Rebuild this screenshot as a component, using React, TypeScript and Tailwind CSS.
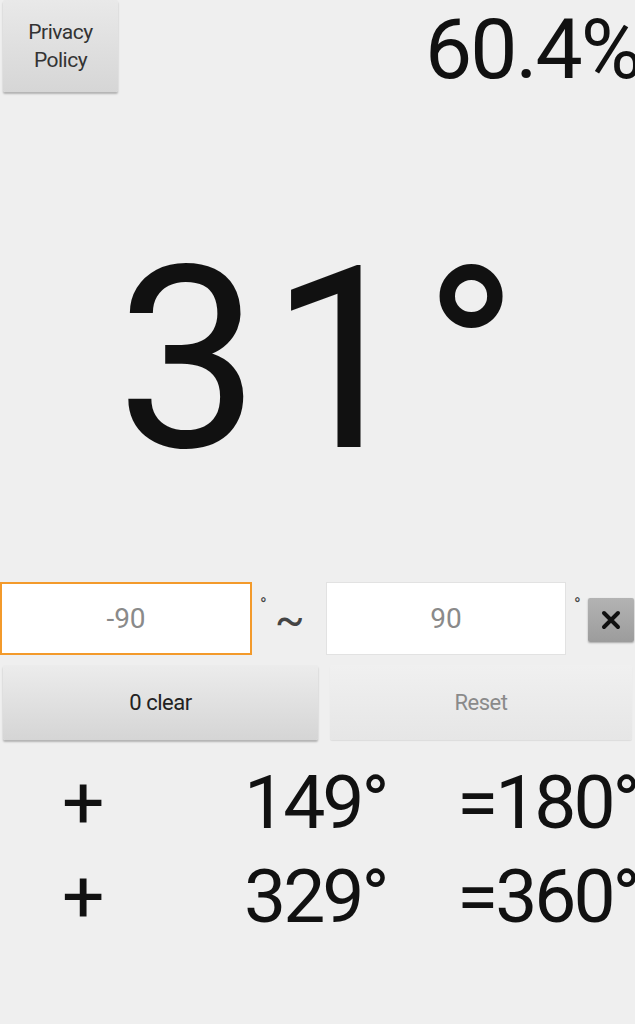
export default function App() {
  return (
    <div
      className="w-[635px] h-[1024px] overflow-hidden bg-[#efefef] text-black"
      style={{ fontFamily: "Roboto, 'Liberation Sans', sans-serif" }}
    >
      {/* top bar */}
      <div className="flex h-[92px] items-start">
        <button className="shrink-0 ml-[3px] w-[115px] h-[92px] rounded-[2px] bg-gradient-to-b from-[#e9e9e9] to-[#d6d6d6] shadow-[0_2px_2px_rgba(0,0,0,0.25)] text-[21px] leading-[28px] text-[#333] tracking-[-0.5px] flex flex-col items-center justify-center">
          <span>Privacy</span>
          <span>Policy</span>
        </button>
        <div className="shrink-0 ml-[307px] mt-[8px] whitespace-nowrap text-[84px] leading-none text-[#111] tracking-[-2px]">
          60.4%
        </div>
      </div>

      {/* big angle */}
      <div className="mt-[140px] h-[255px] text-center text-[255px] leading-none text-[#111] tracking-[10px] pl-[10px]">
        31°
      </div>

      {/* range inputs */}
      <div className="mt-[95px] flex items-start h-[73px]">
        <div className="shrink-0 w-[252px] h-[73px] bg-white border-2 border-[#f39a2b] flex items-center justify-center text-[28px] text-[#8a8a8a]">
          -90
        </div>
        <div className="shrink-0 w-[74px] h-[73px] flex items-start text-[#444]">
          <span className="ml-[8px] mt-[14px] text-[18px] leading-none">°</span>
          <span className="ml-[8px] mt-[16px] text-[44px] leading-none">~</span>
        </div>
        <div className="shrink-0 w-[240px] h-[73px] bg-white border border-[#e2e2e2] flex items-center justify-center text-[28px] text-[#8a8a8a]">
          90
        </div>
        <div className="shrink-0 w-[22px] h-[73px] text-[#444]">
          <span className="ml-[8px] mt-[14px] block text-[18px] leading-none">°</span>
        </div>
        <button className="shrink-0 mt-[16px] w-[46px] h-[44px] rounded-[2px] bg-gradient-to-b from-[#b3b3b3] to-[#9c9c9c] shadow-[0_1px_2px_rgba(0,0,0,0.3)] flex items-center justify-center">
          <svg width="22" height="22" viewBox="0 0 22 22">
            <path d="M4 4 L18 18 M18 4 L4 18" stroke="#111" strokeWidth="4" strokeLinecap="round" />
          </svg>
        </button>
      </div>

      {/* buttons */}
      <div className="mt-[10px] flex h-[75px]">
        <button className="shrink-0 ml-[3px] w-[315px] h-[75px] rounded-[2px] bg-gradient-to-b from-[#ececec] to-[#d5d5d5] shadow-[0_2px_2px_rgba(0,0,0,0.25)] text-[22px] text-[#222] tracking-[-0.5px]">
          0 clear
        </button>
        <button className="shrink-0 ml-[12px] w-[302px] h-[75px] rounded-[2px] bg-gradient-to-b from-[#f0f0f0] to-[#e6e6e6] shadow-[0_1px_1px_rgba(0,0,0,0.08)] text-[22px] text-[#8a8a8a] tracking-[-0.5px]">
          Reset
        </button>
      </div>

      {/* results */}
      <div className="mt-[15px] flex flex-col">
        {[
          ["149°", "=180°"],
          ["329°", "=360°"],
        ].map(([a, b], i) => (
          <div key={i} className="flex items-center h-[94px] text-[75px] leading-none text-[#111] whitespace-nowrap">
            <span className="shrink-0 ml-[62px] w-[182px]">+</span>
            <span className="shrink-0 w-[213px] tracking-[-3px]">{a}</span>
            <span className="shrink-0 tracking-[-3px]">{b}</span>
          </div>
        ))}
      </div>
    </div>
  );
}
